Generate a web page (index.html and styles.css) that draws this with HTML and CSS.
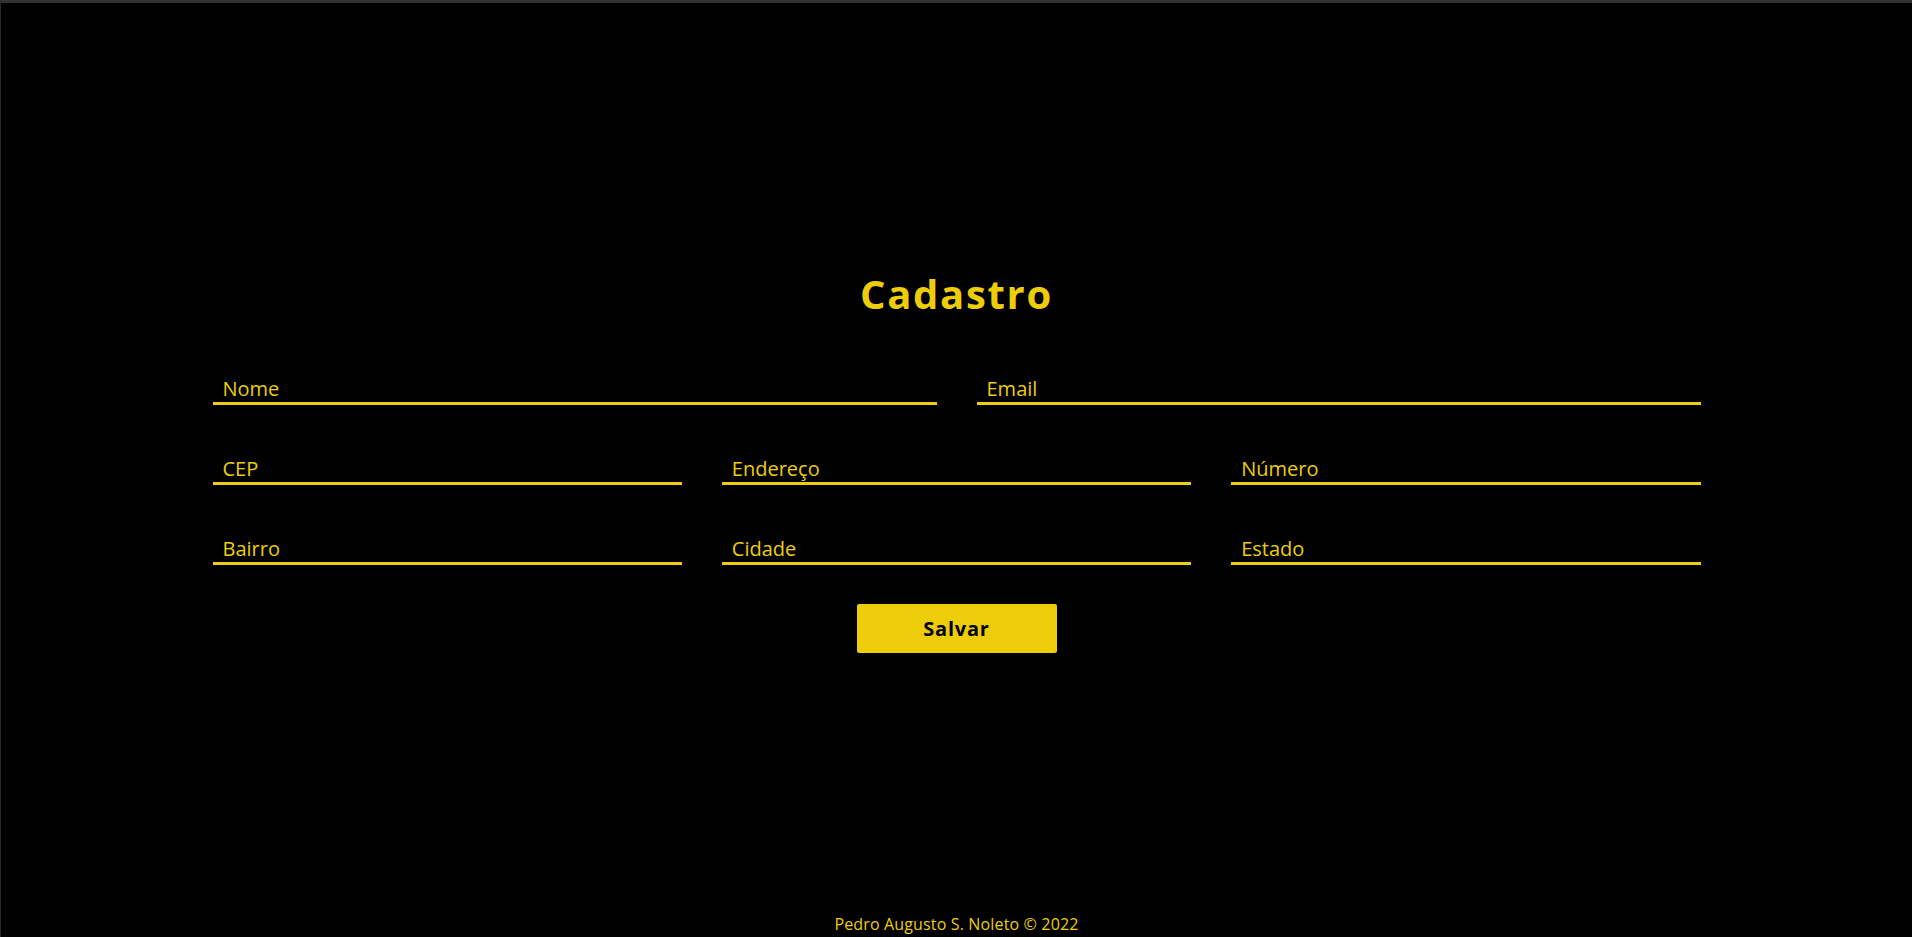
FILE: index.html
```html
<!DOCTYPE html>
<html lang="pt-BR">
<head>
<meta charset="utf-8">
<title>Cadastro</title>
<link rel="stylesheet" href="styles.css">
</head>
<body>
<main class="page">
  <h1 class="title">Cadastro</h1>
  <form class="form">
    <div class="row row-2">
      <label class="field"><span>Nome</span></label>
      <label class="field"><span>Email</span></label>
    </div>
    <div class="row row-3">
      <label class="field"><span>CEP</span></label>
      <label class="field"><span>Endereço</span></label>
      <label class="field"><span>Número</span></label>
    </div>
    <div class="row row-3">
      <label class="field"><span>Bairro</span></label>
      <label class="field"><span>Cidade</span></label>
      <label class="field"><span>Estado</span></label>
    </div>
    <button type="button" class="save">Salvar</button>
  </form>
</main>
<footer class="footer">Pedro Augusto S. Noleto © 2022</footer>
</body>
</html>
```
FILE: styles.css
```css
html, body {
  margin: 0;
  padding: 0;
}
body {
  background: #000;
  height: 937px;
  box-sizing: border-box;
  border-top: 3px solid #333333;
  border-left: 1px solid #2a2a2a;
  display: flex;
  flex-direction: column;
  font-family: "Open Sans", "Liberation Sans", sans-serif;
  color: #edcd09;
  overflow: hidden;
}
.page {
  flex: 1;
  display: flex;
  flex-direction: column;
  align-items: center;
  padding-top: 267px;
}
.title {
  margin: 0;
  font-size: 40px;
  line-height: 48px;
  font-weight: 700;
  letter-spacing: 1.7px;
  color: #edcd09;
}
.form {
  width: 1488px;
  margin-top: 56px;
  display: flex;
  flex-direction: column;
  align-items: center;
  gap: 49px;
}
.row {
  width: 100%;
  display: grid;
  column-gap: 40px;
}
.row-2 { grid-template-columns: 1fr 1fr; }
.row-3 { grid-template-columns: 1fr 1fr 1fr; }
.field {
  display: block;
  padding: 2px 0 0 10px;
  border-bottom: 3px solid #edcd09;
  font-size: 20px;
  line-height: 26px;
  color: #edcd09;
}
.save {
  margin-top: -10px;
  width: 200px;
  height: 49px;
  border: none;
  border-radius: 2px;
  background: #edcd09;
  color: #000;
  font-family: "Open Sans", "Liberation Sans", sans-serif;
  font-weight: 700;
  font-size: 20px;
  letter-spacing: 0.8px;
  cursor: pointer;
}
.footer {
  text-align: center;
  font-size: 16px;
  line-height: 24px;
  letter-spacing: 0.15px;
  padding-bottom: 1px;
  color: #edcd09;
}
```
